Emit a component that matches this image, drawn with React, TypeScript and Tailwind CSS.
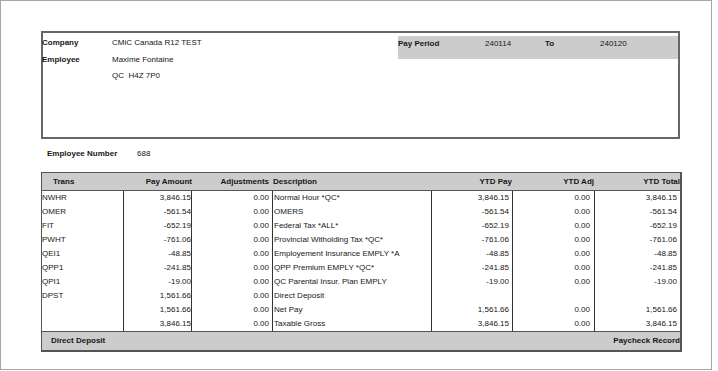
const lines = [
  { trans: "NWHR", pay: "3,846.15", adj: "0.00", desc: "Normal Hour *QC*", ytdPay: "3,846.15", ytdAdj: "0.00", ytdTotal: "3,846.15" },
  { trans: "OMER", pay: "-561.54", adj: "0.00", desc: "OMERS", ytdPay: "-561.54", ytdAdj: "0.00", ytdTotal: "-561.54" },
  { trans: "FIT", pay: "-652.19", adj: "0.00", desc: "Federal Tax *ALL*", ytdPay: "-652.19", ytdAdj: "0.00", ytdTotal: "-652.19" },
  { trans: "PWHT", pay: "-761.06", adj: "0.00", desc: "Provincial Witholding Tax *QC*", ytdPay: "-761.06", ytdAdj: "0.00", ytdTotal: "-761.06" },
  { trans: "QEI1", pay: "-48.85", adj: "0.00", desc: "Employement Insurance EMPLY *A", ytdPay: "-48.85", ytdAdj: "0.00", ytdTotal: "-48.85" },
  { trans: "QPP1", pay: "-241.85", adj: "0.00", desc: "QPP Premium EMPLY *QC*", ytdPay: "-241.85", ytdAdj: "0.00", ytdTotal: "-241.85" },
  { trans: "QPI1", pay: "-19.00", adj: "0.00", desc: "QC Parental Insur. Plan EMPLY", ytdPay: "-19.00", ytdAdj: "0.00", ytdTotal: "-19.00" },
  { trans: "DPST", pay: "1,561.66", adj: "0.00", desc: "Direct Deposit", ytdPay: "", ytdAdj: "", ytdTotal: "" },
  { trans: "", pay: "1,561.66", adj: "0.00", desc: "Net Pay", ytdPay: "1,561.66", ytdAdj: "0.00", ytdTotal: "1,561.66" },
  { trans: "", pay: "3,846.15", adj: "0.00", desc: "Taxable Gross", ytdPay: "3,846.15", ytdAdj: "0.00", ytdTotal: "3,846.15" },
];

const cols = "grid grid-cols-[82px_68px_81px_159px_81px_82px_85px]";

export default function App() {
  return (
    <div className="w-[718px] h-[371px] bg-white font-['Liberation_Sans',Arial,sans-serif] text-[8px] text-[#161616]">
      <div className="w-[712px] h-[370px] border border-[#a6a6a6] pt-[30px] pl-[40px]">
        {/* header box */}
        <div className="flex w-[639px] h-[108px] border-2 border-[#666]">
          <div className="w-[356px] pt-[2px] -ml-[1px] flex flex-col">
            <div className="flex h-[16.5px] items-center">
              <span className="w-[70px] font-bold">Company</span>
              <span>CMiC Canada R12 TEST</span>
            </div>
            <div className="flex h-[16.5px] items-center">
              <span className="w-[70px] font-bold">Employee</span>
              <span>Maxime Fontaine</span>
            </div>
            <div className="flex h-[16.5px] items-center">
              <span className="w-[70px]"></span>
              <span className="whitespace-pre">QC  H4Z 7P0</span>
            </div>
          </div>
          <div className="flex-1 pt-[3px]">
            <div className="flex h-[23px] bg-[#cccccc] pt-[2px]">
              <span className="w-[87px] font-bold">Pay Period</span>
              <span className="w-[60px]">240114</span>
              <span className="w-[55px] font-bold">To</span>
              <span>240120</span>
            </div>
          </div>
        </div>

        {/* employee number */}
        <div className="flex h-[14px] items-center mt-[8px] pl-[6px]">
          <span className="w-[90px] font-bold">Employee Number</span>
          <span>688</span>
        </div>

        {/* transactions table */}
        <div className="w-[641px] mt-[11px] border-t border-l border-[#555] border-r-2 border-b-2">
          <div className={`${cols} h-[18px] items-center bg-[#cccccc] border-b border-[#555] font-bold`}>
            <span className="pl-[11px]">Trans</span>
            <span className="text-right">Pay Amount</span>
            <span className="text-right pr-[4px]">Adjustments</span>
            <span>Description</span>
            <span className="text-right pr-[1px]">YTD Pay</span>
            <span className="text-right pr-[1px]">YTD Adj</span>
            <span className="text-right">YTD Total</span>
          </div>
          <div>
            {lines.map((l, i) => (
              <div key={i} className={`${cols} h-[14px] items-stretch`}>
                <span className="border-r border-[#333] flex items-center">{l.trans}</span>
                <span className="border-r border-[#333] flex items-center justify-end">{l.pay}</span>
                <span className="border-r border-[#333] flex items-center justify-end pr-[3px]">{l.adj}</span>
                <span className="border-r border-[#333] flex items-center pl-[1px] whitespace-nowrap">{l.desc}</span>
                <span className="border-r border-[#333] flex items-center justify-end pr-[3px]">{l.ytdPay}</span>
                <span className="border-r border-[#333] flex items-center justify-end pr-[4px]">{l.ytdAdj}</span>
                <span className="flex items-center justify-end pr-[3px]">{l.ytdTotal}</span>
              </div>
            ))}
          </div>
          <div className="flex h-[19px] items-center justify-between bg-[#cccccc] border-t border-[#555] font-bold pl-[9px]">
            <span>Direct Deposit</span>
            <span>Paycheck Record</span>
          </div>
        </div>
      </div>
    </div>
  );
}
